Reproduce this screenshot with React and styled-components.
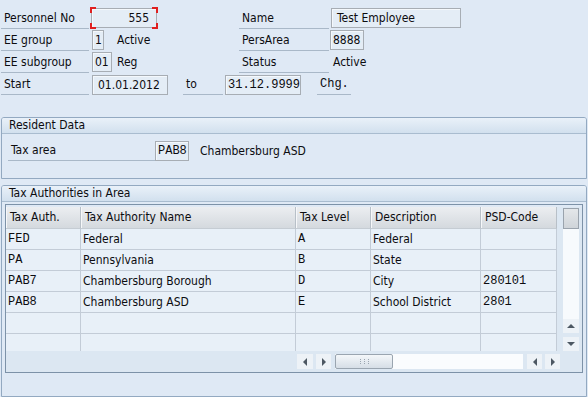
import React from 'react';
import styled, { createGlobalStyle, css } from 'styled-components';

const GlobalStyle = createGlobalStyle`
    html, body {
        margin: 0;
        padding: 0;
    }
    body {
        background: #dfe9f5;
        font-family: "DejaVu Sans Condensed", "DejaVu Sans", "Liberation Sans", Arial, sans-serif;
        font-stretch: condensed;
        font-size: 12px;
        color: #0c0c10;
    }
`;

const mono = css`
    font-family: "Liberation Mono", "Courier New", monospace;
    font-stretch: normal;
    font-size: 12px;
`;

const Screen = styled.div`
    width: 588px;
    height: 397px;
    box-sizing: border-box;
    padding: 0 1px;
    overflow: hidden;
`;

const HeaderForm = styled.div`
    padding-top: 8px;
    display: flex;
    flex-direction: column;
`;

const FormRow = styled.div`
    display: grid;
    grid-template-columns: 90px 148px 92px 1fr;
    height: 22px;
    align-items: start;
`;

const Cell = styled.div`
    display: flex;
    align-items: center;
    grid-column: ${(p) => p.$span || 'auto'};
`;

const Label = styled.div`
    box-sizing: border-box;
    width: ${(p) => p.$w}px;
    height: 21px;
    line-height: 20px;
    padding-left: 3px;
    border-bottom: 1px solid #a9b8c8;
    margin-left: ${(p) => p.$ml || 0}px;
    white-space: nowrap;
    ${(p) => p.$mono && mono}
`;

const Text = styled.span`
    height: 20px;
    line-height: 20px;
    margin-left: ${(p) => p.$ml || 0}px;
    white-space: nowrap;
`;

const Field = styled.span`
    position: relative;
    box-sizing: border-box;
    display: inline-flex;
    align-items: center;
    justify-content: ${(p) => (p.$right ? 'flex-end' : 'flex-start')};
    width: ${(p) => p.$w}px;
    height: 20px;
    padding: 0 ${(p) => p.$pad ?? 3}px;
    margin-left: ${(p) => p.$ml || 0}px;
    background: #e4edf6;
    border: 1px solid #a7adb4;
    box-shadow: inset 1px 1px 0 #f4f8fc;
    white-space: nowrap;
    ${(p) => p.$mono && mono}

    ${(p) =>
        p.$focus &&
        css`
            &::after {
                content: '';
                position: absolute;
                inset: -2px;
                background:
                    linear-gradient(#e02020, #e02020) left top / 6px 2px no-repeat,
                    linear-gradient(#e02020, #e02020) left top / 2px 6px no-repeat,
                    linear-gradient(#e02020, #e02020) right top / 6px 2px no-repeat,
                    linear-gradient(#e02020, #e02020) right top / 2px 6px no-repeat,
                    linear-gradient(#e02020, #e02020) left bottom / 6px 2px no-repeat,
                    linear-gradient(#e02020, #e02020) left bottom / 2px 6px no-repeat,
                    linear-gradient(#e02020, #e02020) right bottom / 6px 2px no-repeat,
                    linear-gradient(#e02020, #e02020) right bottom / 2px 6px no-repeat;
            }
        `}
`;

const Group = styled.section`
    border: 1px solid #93a9c1;
    border-radius: 3px 3px 0 0;
    margin-top: ${(p) => p.$mt || 0}px;
`;

const GroupTitle = styled.div`
    height: 15px;
    line-height: 15px;
    padding-left: 7px;
    background: linear-gradient(#e9f1f9, #d2e0ee);
    border-bottom: 1px solid #a9bccf;
    border-radius: 2px 2px 0 0;
`;

const GroupBody = styled.div`
    display: flex;
    align-items: center;
    padding: 6px 0 17px 6px;
`;

const TableFrame = styled.div`
    margin: 2px 3px 23px 3px;
    border: 1px solid #7d92a8;
    padding-top: 2px;
`;

const TableTop = styled.div`
    display: flex;
`;

const Grid = styled.div`
    width: 551px;
    display: flex;
    flex-direction: column;
`;

const Row = styled.div`
    display: grid;
    grid-template-columns: 75px 215px 75px 110px 76px;
`;

const HeadCell = styled.div`
    height: 21px;
    line-height: 21px;
    padding-left: 4px;
    background: linear-gradient(#eceef1, #d4d9de);
    border-right: 1px solid #b8c0c8;
    border-bottom: 1px solid #c5ccd3;
    box-shadow: inset 1px 0 0 #f6f7f9;
    white-space: nowrap;
    overflow: hidden;
`;

const Body = styled.div`
    height: 122px;
    overflow: hidden;
`;

const DataCell = styled.div`
    height: 20px;
    line-height: 20px;
    padding-left: 2px;
    background: #e8f0f8;
    border-right: 1px solid #c3ccd7;
    border-bottom: 1px solid #c3ccd7;
    white-space: nowrap;
    overflow: hidden;
    ${(p) => p.$mono && mono}
`;

const VScroll = styled.div`
    flex: 1;
    display: flex;
    flex-direction: column;
    padding: 1px 3px 0 6px;
    background: #dce7f2;
`;

const Corner = styled.div`
    box-sizing: border-box;
    height: 21px;
    border: 1px solid #9aa3ad;
    background: linear-gradient(#e4e7ea, #cfd4d9);
`;

const Track = styled.div`
    flex: 1;
    background: #f7fafd;
`;

const ArrowBtn = styled.div`
    display: flex;
    align-items: center;
    justify-content: center;
    width: ${(p) => p.$w || 15}px;
    height: ${(p) => p.$h || 15}px;
    margin-left: ${(p) => p.$ml || 0}px;
    margin-top: ${(p) => p.$mt || 0}px;
    background: #edf2f7;
`;

const Tri = styled.span`
    width: 0;
    height: 0;
    border: 4px solid transparent;
    ${(p) => p.$dir === 'left' && css`border-right-color: #4d5863; border-left-width: 0;`}
    ${(p) => p.$dir === 'right' && css`border-left-color: #4d5863; border-right-width: 0;`}
    ${(p) => p.$dir === 'up' && css`border-bottom-color: #4d5863; border-top-width: 0;`}
    ${(p) => p.$dir === 'down' && css`border-top-color: #4d5863; border-bottom-width: 0;`}
`;

const HScroll = styled.div`
    display: flex;
    align-items: center;
    height: 21px;
    padding-left: 291px;
    background: #dce7f2;
`;

const HTrack = styled.div`
    width: 188px;
    height: 15px;
    margin: 0 4px;
    background: #fafcfe;
    display: flex;
`;

const Thumb = styled.div`
    box-sizing: border-box;
    width: 58px;
    height: 15px;
    border: 1px solid #9aa5b0;
    border-radius: 2px;
    background: linear-gradient(#f4f7fa, #d6dee6);
    display: flex;
    align-items: center;
    justify-content: center;
`;

const Grip = styled.svg`
    display: block;
`;

const columns = ['Tax Auth.', 'Tax Authority Name', 'Tax Level', 'Description', 'PSD-Code'];

const rows = [
    ['FED', 'Federal', 'A', 'Federal', ''],
    ['PA', 'Pennsylvania', 'B', 'State', ''],
    ['PAB7', 'Chambersburg Borough', 'D', 'City', '280101'],
    ['PAB8', 'Chambersburg ASD', 'E', 'School District', '2801'],
    ['', '', '', '', ''],
    ['', '', '', '', ''],
];

const monoCols = [true, false, true, false, true];

export default function App() {
    return (
        <Screen>
            <GlobalStyle />
            <HeaderForm>
                <FormRow>
                    <Label $w={88}>Personnel No</Label>
                    <Cell><Field $w={66} $right $pad={7} $focus>555</Field></Cell>
                    <Label $w={90}>Name</Label>
                    <Cell><Field $w={130} $pad={5}>Test Employee</Field></Cell>
                </FormRow>
                <FormRow>
                    <Label $w={88}>EE group</Label>
                    <Cell>
                        <Field $w={12} $pad={2} $ml={1}>1</Field>
                        <Text $ml={13}>Active</Text>
                    </Cell>
                    <Label $w={90}>PersArea</Label>
                    <Cell><Field $w={34} $pad={2} $ml={-1}>8888</Field></Cell>
                </FormRow>
                <FormRow>
                    <Label $w={88}>EE subgroup</Label>
                    <Cell>
                        <Field $w={20} $pad={2} $ml={1}>01</Field>
                        <Text $ml={5}>Reg</Text>
                    </Cell>
                    <Label $w={90}>Status</Label>
                    <Cell><Text $ml={2}>Active</Text></Cell>
                </FormRow>
                <FormRow>
                    <Label $w={88}>Start</Label>
                    <Cell $span="2 / -1">
                        <Field $w={76} $pad={5} $ml={1}>01.01.2012</Field>
                        <Label $w={40} $ml={15}>to</Label>
                        <Field $w={76} $pad={2} $ml={2} $mono>31.12.9999</Field>
                        <Label $w={34} $ml={16} $mono>Chg.</Label>
                    </Cell>
                </FormRow>
            </HeaderForm>

            <Group $mt={21}>
                <GroupTitle>Resident Data</GroupTitle>
                <GroupBody>
                    <Label $w={147}>Tax area</Label>
                    <Field $w={34} $pad={2} $mono>PAB8</Field>
                    <Text $ml={11}>Chambersburg ASD</Text>
                </GroupBody>
            </Group>

            <Group $mt={6}>
                <GroupTitle>Tax Authorities in Area</GroupTitle>
                <TableFrame>
                    <TableTop>
                        <Grid>
                            <Row>
                                {columns.map((c) => (
                                    <HeadCell key={c}>{c}</HeadCell>
                                ))}
                            </Row>
                            <Body>
                                {rows.map((r, i) => (
                                    <Row key={i}>
                                        {r.map((v, j) => (
                                            <DataCell key={j} $mono={monoCols[j]}>{v}</DataCell>
                                        ))}
                                    </Row>
                                ))}
                            </Body>
                        </Grid>
                        <VScroll>
                            <Corner />
                            <Track />
                            <ArrowBtn $w={16} $h={14}><Tri $dir="up" /></ArrowBtn>
                            <ArrowBtn $w={16} $h={14} $mt={4}><Tri $dir="down" /></ArrowBtn>
                        </VScroll>
                    </TableTop>
                    <HScroll>
                        <ArrowBtn $w={16}><Tri $dir="left" /></ArrowBtn>
                        <ArrowBtn $ml={3}><Tri $dir="right" /></ArrowBtn>
                        <HTrack>
                            <Thumb>
                                <Grip width="9" height="5" viewBox="0 0 9 5">
                                    <g fill="#9aa5b0">
                                        <rect x="0" y="0" width="1" height="1" />
                                        <rect x="4" y="0" width="1" height="1" />
                                        <rect x="8" y="0" width="1" height="1" />
                                        <rect x="0" y="2" width="1" height="1" />
                                        <rect x="4" y="2" width="1" height="1" />
                                        <rect x="8" y="2" width="1" height="1" />
                                        <rect x="0" y="4" width="1" height="1" />
                                        <rect x="4" y="4" width="1" height="1" />
                                        <rect x="8" y="4" width="1" height="1" />
                                    </g>
                                </Grip>
                            </Thumb>
                        </HTrack>
                        <ArrowBtn><Tri $dir="left" /></ArrowBtn>
                        <ArrowBtn $ml={3}><Tri $dir="right" /></ArrowBtn>
                    </HScroll>
                </TableFrame>
            </Group>
        </Screen>
    );
}
